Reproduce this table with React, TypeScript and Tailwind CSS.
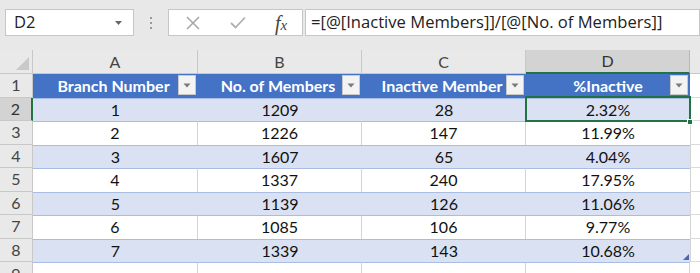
import React from "react";

const rows = [
  ["1", "1209", "28", "2.32%"],
  ["2", "1226", "147", "11.99%"],
  ["3", "1607", "65", "4.04%"],
  ["4", "1337", "240", "17.95%"],
  ["5", "1139", "126", "11.06%"],
  ["6", "1085", "106", "9.77%"],
  ["7", "1339", "143", "10.68%"],
];

const cols = ["A", "B", "C", "D"];
const headers = ["Branch Number", "No. of Members", "Inactive Member", "%Inactive"];

function FilterBtn() {
  return (
    <div className="absolute right-[2px] top-[1px] w-[18px] h-[20px] bg-[#f3f3f3] border border-[#c8c8c8] flex items-center justify-center">
      <svg width="8" height="5" viewBox="0 0 8 5">
        <path d="M0.5 0.5 L7.5 0.5 L4 4.5 Z" fill="#7a7a7a" />
      </svg>
    </div>
  );
}

export default function App() {
  const font = { fontFamily: "Lato, 'Open Sans', sans-serif" };
  return (
    <div className="w-[700px] h-[273px] overflow-hidden bg-white relative" style={font}>
      {/* formula bar */}
      <div className="h-[50px] bg-[#e8e8e8] flex items-start pt-[9px] pl-[5px]">
        <div className="w-[129px] h-[27px] bg-white border border-[#c6c6c6] flex items-center justify-between pl-[8px] pr-[11px]">
          <span className="text-[16.5px] text-[#222]" style={{ fontFamily: "'Open Sans', sans-serif" }}>D2</span>
          <svg width="7" height="4" viewBox="0 0 7 4"><path d="M0 0 L7 0 L3.5 4 Z" fill="#666" /></svg>
        </div>
        <div className="w-[34px] h-[27px] flex flex-col items-center justify-center gap-[3px]">
          <div className="w-[2px] h-[2px] bg-[#9a9a9a]" />
          <div className="w-[2px] h-[2px] bg-[#9a9a9a]" />
          <div className="w-[2px] h-[2px] bg-[#9a9a9a]" />
        </div>
        <div className="w-[135px] h-[27px] bg-white border border-[#c6c6c6] flex items-center">
          <div className="w-[44px] flex justify-center ml-[2px]">
            <svg width="14" height="14" viewBox="0 0 14 14">
              <path d="M1 1 L13 13 M13 1 L1 13" stroke="#a8a8a8" strokeWidth="1.6" />
            </svg>
          </div>
          <div className="w-[46px] flex justify-center">
            <svg width="16" height="13" viewBox="0 0 16 13">
              <path d="M1 7 L5.5 11.5 L15 1.5" stroke="#b0b0b0" strokeWidth="1.8" fill="none" />
            </svg>
          </div>
          <div className="w-[40px] flex justify-center">
            <span className="italic text-[20px] text-[#444] leading-none" style={{ fontFamily: "'Liberation Serif', serif" }}>
              f<span className="text-[15px]">x</span>
            </span>
          </div>
        </div>
        <div className="w-[2px]" />
        <div className="flex-1 h-[27px] bg-white border border-[#c6c6c6] flex items-center pl-[5px]">
          <span className="text-[16.6px] text-[#222] whitespace-nowrap" style={{ fontFamily: "'Open Sans', sans-serif" }}>
            =[@[Inactive Members]]/[@[No. of Members]]
          </span>
        </div>
      </div>

      {/* sheet */}
      <div className="grid grid-cols-[33px_165px_164px_164px_164px_1fr] text-[16px]">
        {/* column headers */}
        <div className="h-[24px] bg-[#e9e9e9] border-r border-b border-[#c8c8c8] relative">
          <svg className="absolute right-[3px] bottom-[3px]" width="13" height="13" viewBox="0 0 13 13">
            <path d="M13 0 L13 13 L0 13 Z" fill="#c9c9c9" />
          </svg>
        </div>
        {cols.map((c) => (
          <div
            key={c}
            className={
              c === "D"
                ? "h-[24px] bg-[#d3d3d3] border-r border-[#b8b8b8] border-b-2 border-b-[#217346] flex items-center justify-center text-[#333]"
                : "h-[24px] bg-[#e9e9e9] border-r border-b border-[#c8c8c8] flex items-center justify-center text-[#444]"
            }
          >
            {c}
          </div>
        ))}
        <div className="h-[24px] bg-[#e9e9e9] border-b border-[#c8c8c8]" />

        {/* row 1 header */}
        <div className="h-[23.5px] bg-[#e9e9e9] border-r border-b border-[#c8c8c8] flex items-center justify-center text-[#444]">1</div>
        {headers.map((h, i) => (
          <div key={h} className="h-[23.5px] bg-[#4472c4] relative flex items-center justify-center">
            <span className={"font-bold text-white whitespace-nowrap " + (i === 3 ? "" : "pr-[4px]")}>{h}</span>
            <FilterBtn />
          </div>
        ))}
        <div className="h-[23.5px] border-b border-[#dadada]" />

        {rows.map((r, idx) => {
          const band = idx % 2 === 0;
          const rowNum = idx + 2;
          const sel = rowNum === 2;
          return (
            <React.Fragment key={idx}>
              <div
                className={
                  sel
                    ? "h-[23.5px] bg-[#d3d3d3] border-r-2 border-r-[#217346] border-b border-[#c8c8c8] flex items-center justify-center text-[#333]"
                    : "h-[23.5px] bg-[#e9e9e9] border-r border-b border-[#c8c8c8] flex items-center justify-center text-[#444]"
                }
              >
                {rowNum}
              </div>
              {r.map((v, j) => (
                <div
                  key={j}
                  className={
                    (band ? "bg-[#d9e1f2] " : "bg-white ") +
                    (j < 3 && !band ? "border-r border-r-[#d4d4d4] " : "") +
                    "h-[23.5px] border-t border-t-[#a9bde3] flex items-center justify-center text-[#111] relative"
                  }
                >
                  {v}
                  {idx === 6 && j === 3 && (
                    <div className="absolute right-[2px] bottom-[3px] w-[5px] h-[5px]">
                      <svg width="6" height="6" viewBox="0 0 6 6"><path d="M6 0 L6 6 L0 6 Z" fill="#4a66b0" /></svg>
                    </div>
                  )}
                </div>
              ))}
              <div className="h-[23.5px] border-l border-l-[#d4d4d4] border-b border-[#dadada]" />
            </React.Fragment>
          );
        })}

        {/* row 9 */}
        <div className="h-[23.5px] bg-[#e9e9e9] border-r border-[#c8c8c8] flex items-center justify-center text-[#444]">9</div>
        <div className="h-[23.5px] border-t border-t-[#a9bde3] border-r border-r-[#d4d4d4]" />
        <div className="h-[23.5px] border-t border-t-[#a9bde3] border-r border-r-[#d4d4d4]" />
        <div className="h-[23.5px] border-t border-t-[#a9bde3] border-r border-r-[#d4d4d4]" />
        <div className="h-[23.5px] border-t border-t-[#a9bde3] border-r border-r-[#d4d4d4]" />
        <div className="h-[23.5px]" />
      </div>

      {/* selection D2 */}
      <div className="absolute left-[525px] top-[96px] w-[166px] h-[26px] border-2 border-[#217346] pointer-events-none" />
      <div className="absolute left-[687px] top-[119px] w-[6px] h-[6px] bg-[#217346] border border-white pointer-events-none" />
    </div>
  );
}
